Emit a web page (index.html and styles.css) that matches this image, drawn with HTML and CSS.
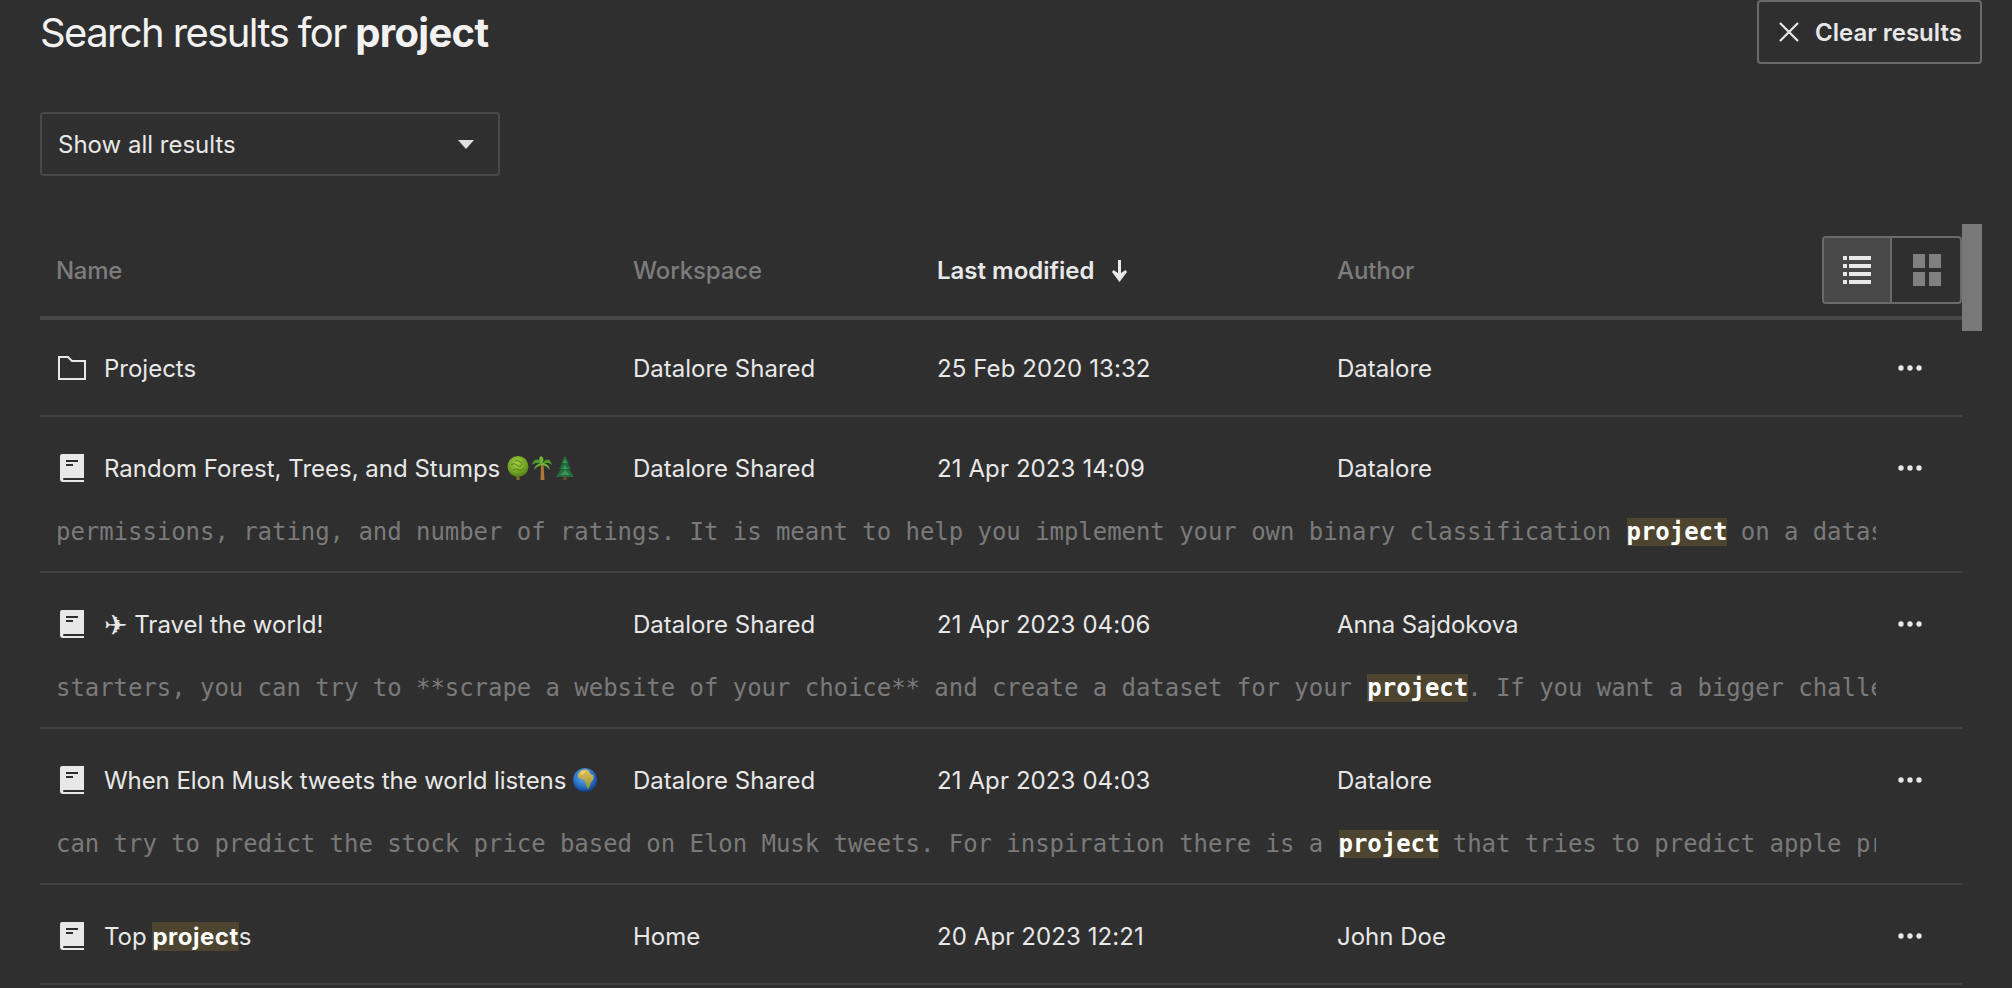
FILE: index.html
```html
<!DOCTYPE html>
<html lang="en">
<head>
<meta charset="utf-8">
<title>Search results</title>
<link rel="stylesheet" href="styles.css">
</head>
<body>
<main class="page">
  <header class="top">
    <h1 class="title">Search results for <b>project</b></h1>
    <button class="clear">
      <svg class="clear-x" viewBox="0 0 20 20"><path d="M1 1 19 19M19 1 1 19"/></svg>
      <span>Clear results</span>
    </button>
  </header>

  <div class="select">
    <span>Show all results</span>
    <svg class="caret" viewBox="0 0 16 9"><path d="M0 0H16L8 9Z"/></svg>
  </div>

  <section class="table">
    <div class="thead row-grid">
      <div class="th th-name">Name</div>
      <div class="th">Workspace</div>
      <div class="th th-active">Last modified
        <svg class="sort" viewBox="0 0 15 22"><path d="M6 0h3v13l4.500-3 1.500 2-7.500 10L0 12l1.500-2L6 13Z"/></svg>
      </div>
      <div class="th">Author</div>
      <div class="toggle">
        <span class="toggle-btn on">
          <svg viewBox="0 0 28 28" class="t-ico"><path d="M0 0h4v4H0zM6 0h22v4H6zM0 8h4v4H0zM6 8h22v4H6zM0 16h4v4H0zM6 16h22v4H6zM0 24h4v4H0zM6 24h22v4H6z"/></svg>
        </span>
        <span class="toggle-btn">
          <svg viewBox="0 0 28 32" class="g-ico"><path d="M0 0h12v14H0zM16 0h12v14H16zM0 18h12v14H0zM16 18h12v14H16z"/></svg>
        </span>
      </div>
    </div>

    <article class="row">
      <div class="row-grid main">
        <div class="name">
          <svg class="ico" viewBox="0 0 28 24"><path class="folder" d="M1 1H10L14 5H27V23H1Z"/></svg>
          <span>Projects</span>
        </div>
        <div>Datalore Shared</div><div class="date">25 Feb 2020 13:32</div><div>Datalore</div>
        <svg class="dots" viewBox="0 0 24 6"><circle cx="3" cy="3" r="2.7"/><circle cx="12" cy="3" r="2.7"/><circle cx="21" cy="3" r="2.7"/></svg>
      </div>
    </article>

    <article class="row">
      <div class="row-grid main">
        <div class="name">
          <svg class="ico book" viewBox="0 0 24 28"><use href="#book"/></svg>
          <span>Random Forest, Trees, and Stumps <svg class="emoji" viewBox="0 0 24 24"><use href="#e-tree"/></svg><svg class="emoji" viewBox="0 0 24 24"><use href="#e-palm"/></svg><svg class="emoji" viewBox="0 0 24 24"><use href="#e-pine"/></svg></span>
        </div>
        <div>Datalore Shared</div><div class="date">21 Apr 2023 14:09</div><div>Datalore</div>
        <svg class="dots" viewBox="0 0 24 6"><circle cx="3" cy="3" r="2.7"/><circle cx="12" cy="3" r="2.7"/><circle cx="21" cy="3" r="2.7"/></svg>
      </div>
      <p class="snippet">permissions, rating, and number of ratings. It is meant to help you implement your own binary classification <mark>project</mark> on a dataset of your own choosing and then see how</p>
    </article>

    <article class="row">
      <div class="row-grid main">
        <div class="name">
          <svg class="ico book" viewBox="0 0 24 28"><use href="#book"/></svg>
          <span><span class="plane">✈</span> Travel the world!</span>
        </div>
        <div>Datalore Shared</div><div class="date">21 Apr 2023 04:06</div><div class="tight">Anna Sajdokova</div>
        <svg class="dots" viewBox="0 0 24 6"><circle cx="3" cy="3" r="2.7"/><circle cx="12" cy="3" r="2.7"/><circle cx="21" cy="3" r="2.7"/></svg>
      </div>
      <p class="snippet">starters, you can try to **scrape a website of your choice** and create a dataset for your <mark>project</mark>. If you want a bigger challenge, you can try to build something new</p>
    </article>

    <article class="row">
      <div class="row-grid main">
        <div class="name">
          <svg class="ico book" viewBox="0 0 24 28"><use href="#book"/></svg>
          <span class="tight">When Elon Musk tweets the world listens <svg class="emoji" viewBox="0 0 24 24"><use href="#e-globe"/></svg></span>
        </div>
        <div>Datalore Shared</div><div class="date">21 Apr 2023 04:03</div><div>Datalore</div>
        <svg class="dots" viewBox="0 0 24 6"><circle cx="3" cy="3" r="2.7"/><circle cx="12" cy="3" r="2.7"/><circle cx="21" cy="3" r="2.7"/></svg>
      </div>
      <p class="snippet">can try to predict the stock price based on Elon Musk tweets. For inspiration there is a <mark>project</mark> that tries to predict apple price movements from tweets about the company</p>
    </article>

    <article class="row">
      <div class="row-grid main">
        <div class="name">
          <svg class="ico book" viewBox="0 0 24 28"><use href="#book"/></svg>
          <span>Top <mark class="hit">project</mark>s</span>
        </div>
        <div>Home</div><div class="date">20 Apr 2023 12:21</div><div>John Doe</div>
        <svg class="dots" viewBox="0 0 24 6"><circle cx="3" cy="3" r="2.7"/><circle cx="12" cy="3" r="2.7"/><circle cx="21" cy="3" r="2.7"/></svg>
      </div>
    </article>
  </section>
  <div class="scrollbar"></div>
</main>

<svg class="defs" width="0" height="0">
  <defs>
    <radialGradient id="g-crown" cx="45%" cy="35%" r="65%"><stop offset="0" stop-color="#a8cf45"/><stop offset="0.7" stop-color="#6f9f22"/><stop offset="1" stop-color="#4c7a16"/></radialGradient>
    <radialGradient id="g-ocean" cx="45%" cy="35%" r="65%"><stop offset="0" stop-color="#69b4ec"/><stop offset="0.65" stop-color="#2a6fc6"/><stop offset="1" stop-color="#123a86"/></radialGradient>
    <linearGradient id="g-land" x1="0" y1="0" x2="0" y2="1"><stop offset="0" stop-color="#d9c25a"/><stop offset="0.5" stop-color="#c0a848"/><stop offset="1" stop-color="#5f9a3c"/></linearGradient>
  </defs>
  <symbol id="book" viewBox="0 0 24 28">
    <path fill="#e8e8e8" fill-rule="evenodd" d="M2 0H24V24H4Q3 24 3 25T4 26H24V28H3Q0 28 0 25V2Q0 0 2 0ZM6 6V8H18V6ZM6 10V12H13V10Z"/>
  </symbol>
  <symbol id="e-tree" viewBox="0 0 24 24">
    <path d="M9.500 19h3v5h-3z" fill="#8f6a2c"/>
    <circle cx="11" cy="10.500" r="10.500" fill="url(#g-crown)"/>
    <g fill="none" stroke="#4f7f18" stroke-width="1">
      <path d="M4 9q3-3 6 0t5-1M6 14q4-2 6 0t5-2M8 5q3-1 5 1t3 0"/>
    </g>
  </symbol>
  <symbol id="e-palm" viewBox="0 0 24 24">
    <path d="M10 8h2.500l1 16h-4z" fill="#a9793a"/>
    <path d="M11 8C8 2 3 2 1 9 5 6 8 7 11 9ZM11 8C15 2 19 2 21 9 17 6 14 7 11 9Z" fill="#4f9a2a"/>
    <path d="M11 8C8 5 7 2 10 0 12 1 14 3 11 8ZM11 7C8 7 4 9 3 14 6 10 8 10 11 9ZM11 7C15 7 18 9 19 14 16 10 14 10 11 9Z" fill="#6fb236"/>
  </symbol>
  <symbol id="e-pine" viewBox="0 0 24 24">
    <rect x="8.500" y="20" width="3" height="4" fill="#6f4a2a"/>
    <path d="M10 0 14 7H12.500L16 13H14L19 21H1L6 13H4L7.500 7H6Z" fill="#236b3c"/>
    <path d="M10 3 12 7H8ZM10 9 13 13H7ZM10 14 15 19H5Z" fill="#3a9556"/>
  </symbol>
  <symbol id="e-globe" viewBox="0 0 24 24">
    <circle cx="12" cy="12" r="12" fill="url(#g-ocean)"/>
    <path d="M8 2.500C6 4 4.500 6 5 9 6 11 9 10 11 12 12.500 14 13 19 15 21.500 17 19 17 15 19 13 21 11 21 9 20 7 17 7 17 4 15 2 13 1 10 1.500 8 2.500Z" fill="url(#g-land)"/>
    <path d="M9 3C8 4.500 7 6 8 7 10 7 12 5 12.500 3.500 11.500 2.500 10 2.500 9 3Z" fill="#e3d06c"/>
  </symbol>
</svg>
</body>
</html>
```

FILE: styles.css
```css
* { box-sizing: border-box; }
html, body { margin: 0; height: 100%; overflow: hidden; }
body {
  background: #2f2f2f;
  color: #e8e8e8;
  font-family: Inter, "Liberation Sans", sans-serif;
  font-size: 24px;
  line-height: 32px;
}
.page { position: relative; padding: 0 30px 0 40px; height: 988px; overflow: hidden; }
.top { display: flex; justify-content: space-between; align-items: flex-start; }
.title { margin: 9px 0 0; font-size: 40px; line-height: 48px; font-weight: 400; color: #f2f2f2; letter-spacing: -1.6px; }
.title b { font-weight: 700; letter-spacing: -0.7px; }
.clear {
  display: flex; align-items: center; gap: 16px;
  width: 225px; height: 64px; padding: 2px 14px 0 20px;
  background: none; border: 2px solid #6a6a6a; border-radius: 4px;
  color: #e8e8e8; font: 600 24px/32px Inter, "Liberation Sans", sans-serif;
  white-space: nowrap;
}
.clear-x { width: 20px; height: 20px; flex: none; margin-bottom: 2px; fill: none; stroke: #e8e8e8; stroke-width: 2.200; }
.select {
  display: flex; justify-content: space-between; align-items: center;
  width: 460px; height: 64px; margin-top: 48px; padding: 2px 24px 0 16px;
  border: 2px solid #484848; border-radius: 4px;
}
.caret { width: 16px; height: 9px; margin-bottom: 2px; fill: #e0e0e0; }
.table { width: 1922px; margin-top: 47px; }
.row-grid {
  display: grid;
  grid-template-columns: 576px 304px 400px 1fr 64px;
  align-items: center;
  padding-left: 17px;
}
.thead {
  position: relative;
  height: 97px;
  margin-bottom: -3px;
  padding-top: 2px;
  border-bottom: 4px solid #484848;
}
.th { color: #7c7c7c; font-weight: 500; letter-spacing: -0.1px; }
.th-name { margin-left: -1px; letter-spacing: -0.3px; }
.th-active { color: #e8e8e8; font-weight: 600; letter-spacing: 0; display: flex; align-items: center; gap: 18px; }
.sort { width: 15px; height: 22px; fill: #e8e8e8; }
.toggle {
  position: absolute; right: 0; top: 13px;
  display: flex; width: 140px; height: 68px;
  border: 2px solid #6a6a6a; border-radius: 4px; overflow: hidden;
}
.toggle-btn { flex: 1; display: flex; align-items: center; justify-content: center; }
.toggle-btn + .toggle-btn { border-left: 2px solid #6a6a6a; padding-left: 2px; }
.toggle-btn.on { background: #484848; }
.t-ico { width: 28px; height: 28px; fill: #e8e8e8; }
.g-ico { width: 28px; height: 32px; fill: #808080; }
.row { border-bottom: 2px solid #424242; }
.main { height: 98px; padding-top: 6px; color: #e8e8e8; }
.name { display: flex; align-items: center; gap: 18px; white-space: nowrap; }
.date { letter-spacing: 0.1px; }
.tight { letter-spacing: -0.07px; }
.ico { width: 28px; height: 24px; flex: none; margin-left: 1px; margin-bottom: 2px; }
.folder { fill: none; stroke: #e8e8e8; stroke-width: 2; }
.book { width: 24px; height: 28px; margin: 0 2px 2px 3px; }
.emoji { width: 24px; height: 24px; vertical-align: -3px; }
.plane { font-family: "DejaVu Sans", sans-serif; font-size: 28px; line-height: 1; vertical-align: -2px; }
.dots { width: 24px; height: 6px; margin-bottom: 2px; justify-self: start; }
.dots circle { fill: #e8e8e8; }
.snippet {
  width: 1820px; height: 29px; margin: 3px 0 24px 16px;
  overflow: hidden; white-space: nowrap;
  font-family: "DejaVu Sans Mono", "Liberation Mono", monospace;
  font-size: 24px; line-height: 29px; color: #7a7a7a;
  letter-spacing: -0.05px;
}
.snippet mark { margin-left: 1px; margin-right: -1px; }
mark { background: #4d452f; color: #fff; font-weight: 700; }
.hit { letter-spacing: 0.5px; margin-left: -1px; }
.scrollbar { position: absolute; left: 1962px; top: 224px; width: 20px; height: 107px; background: #787878; }
.defs { position: absolute; }
```
